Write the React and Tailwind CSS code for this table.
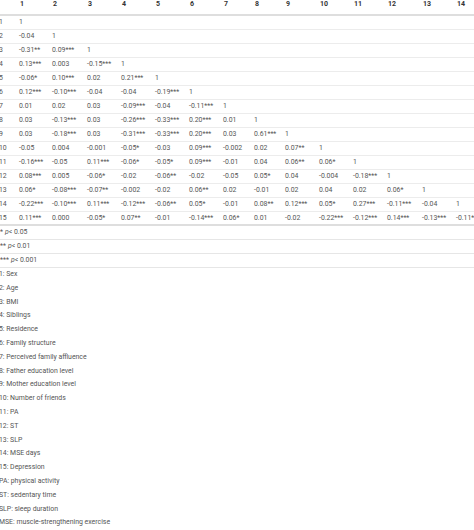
import React from 'react';

const rows = [
  ['1'],
  ['-0.04', '1'],
  ['-0.31**', '0.09***', '1'],
  ['0.13***', '0.003', '-0.15***', '1'],
  ['-0.06*', '0.10***', '0.02', '0.21***', '1'],
  ['0.12***', '-0.10***', '-0.04', '-0.04', '-0.19***', '1'],
  ['0.01', '0.02', '0.03', '-0.09***', '-0.04', '-0.11***', '1'],
  ['0.03', '-0.13***', '0.03', '-0.26***', '-0.33***', '0.20***', '0.01', '1'],
  ['0.03', '-0.18***', '0.03', '-0.31***', '-0.33***', '0.20***', '0.03', '0.61***', '1'],
  ['-0.05', '0.004', '-0.001', '-0.05*', '-0.03', '0.09***', '-0.002', '0.02', '0.07**', '1'],
  ['-0.16***', '-0.05', '0.11***', '-0.06*', '-0.05*', '0.09***', '-0.01', '0.04', '0.06**', '0.06*', '1'],
  ['0.08***', '0.005', '-0.06*', '-0.02', '-0.06**', '-0.02', '-0.05', '0.05*', '0.04', '-0.004', '-0.18***', '1'],
  ['0.06*', '-0.08***', '-0.07**', '-0.002', '-0.02', '0.06**', '0.02', '-0.01', '0.02', '0.04', '0.02', '0.06*', '1'],
  ['-0.22***', '-0.10***', '0.11***', '-0.12***', '-0.06**', '0.05*', '-0.01', '0.08**', '0.12***', '0.05*', '0.27***', '-0.11***', '-0.04', '1'],
  ['0.11***', '0.000', '-0.05*', '0.07**', '-0.01', '-0.14***', '0.06*', '0.01', '-0.02', '-0.22***', '-0.12***', '0.14***', '-0.13***', '-0.11**', '1'],
];

const legend = [
  '1: Sex',
  '2: Age',
  '3: BMI',
  '4: Siblings',
  '5: Residence',
  '6: Family structure',
  '7: Perceived family affluence',
  '8: Father education level',
  '9: Mother education level',
  '10: Number of friends',
  '11: PA',
  '12: ST',
  '13: SLP',
  '14: MSE days',
  '15: Depression',
  'PA: physical activity',
  'ST: sedentary time',
  'SLP: sleep duration',
  'MSE: muscle-strengthening exercise',
];

const notes = [
  ['*', '< 0.05'],
  ['**', '< 0.01'],
  ['***', '< 0.001'],
];

const cols = 'grid grid-cols-[20px_33px_35px_34px_34px_34px_34px_31px_31px_34px_34px_34px_35px_34px_34px_34px]';

const App = () => {
  const heads = Array.from({ length: 15 }, (_, i) => String(i + 1));

  return (
    <div className="w-[474px] h-[530px] overflow-hidden bg-white font-['Roboto',sans-serif] text-[6.9px] text-[#555]">
      <div className="ml-[-1px] w-[520px]">
        {/* header */}
        <div className={`${cols} h-[16px] border-b-2 border-[#dedede] font-bold text-[7px] text-[#333] leading-[9px]`}>
          <div />
          {heads.map((h) => (
            <div key={h} className="pl-[1px]">{h}</div>
          ))}
        </div>

        {/* body */}
        {rows.map((r, i) => (
          <div
            key={i}
            className={`${cols} h-[14px] items-center ${i === rows.length - 1 ? 'border-b-2 border-[#dedede]' : 'border-b border-[#ececec]'}`}
          >
            <div>{i + 1}</div>
            {r.map((v, j) => (
              <div key={j} className="whitespace-nowrap">{v}</div>
            ))}
          </div>
        ))}

        {/* notes */}
        {notes.map(([s, t]) => (
          <div key={s} className="h-[14px] flex items-center border-b border-[#e6e6e6] pl-[1px]">
            {s} <em className="ml-[2px]">p</em>
            {t}
          </div>
        ))}

        {/* legend */}
        <div>
          {legend.map((l) => (
            <div key={l} className="leading-[13.8px] whitespace-nowrap">{l}</div>
          ))}
        </div>
      </div>
    </div>
  );
};

export default App;
